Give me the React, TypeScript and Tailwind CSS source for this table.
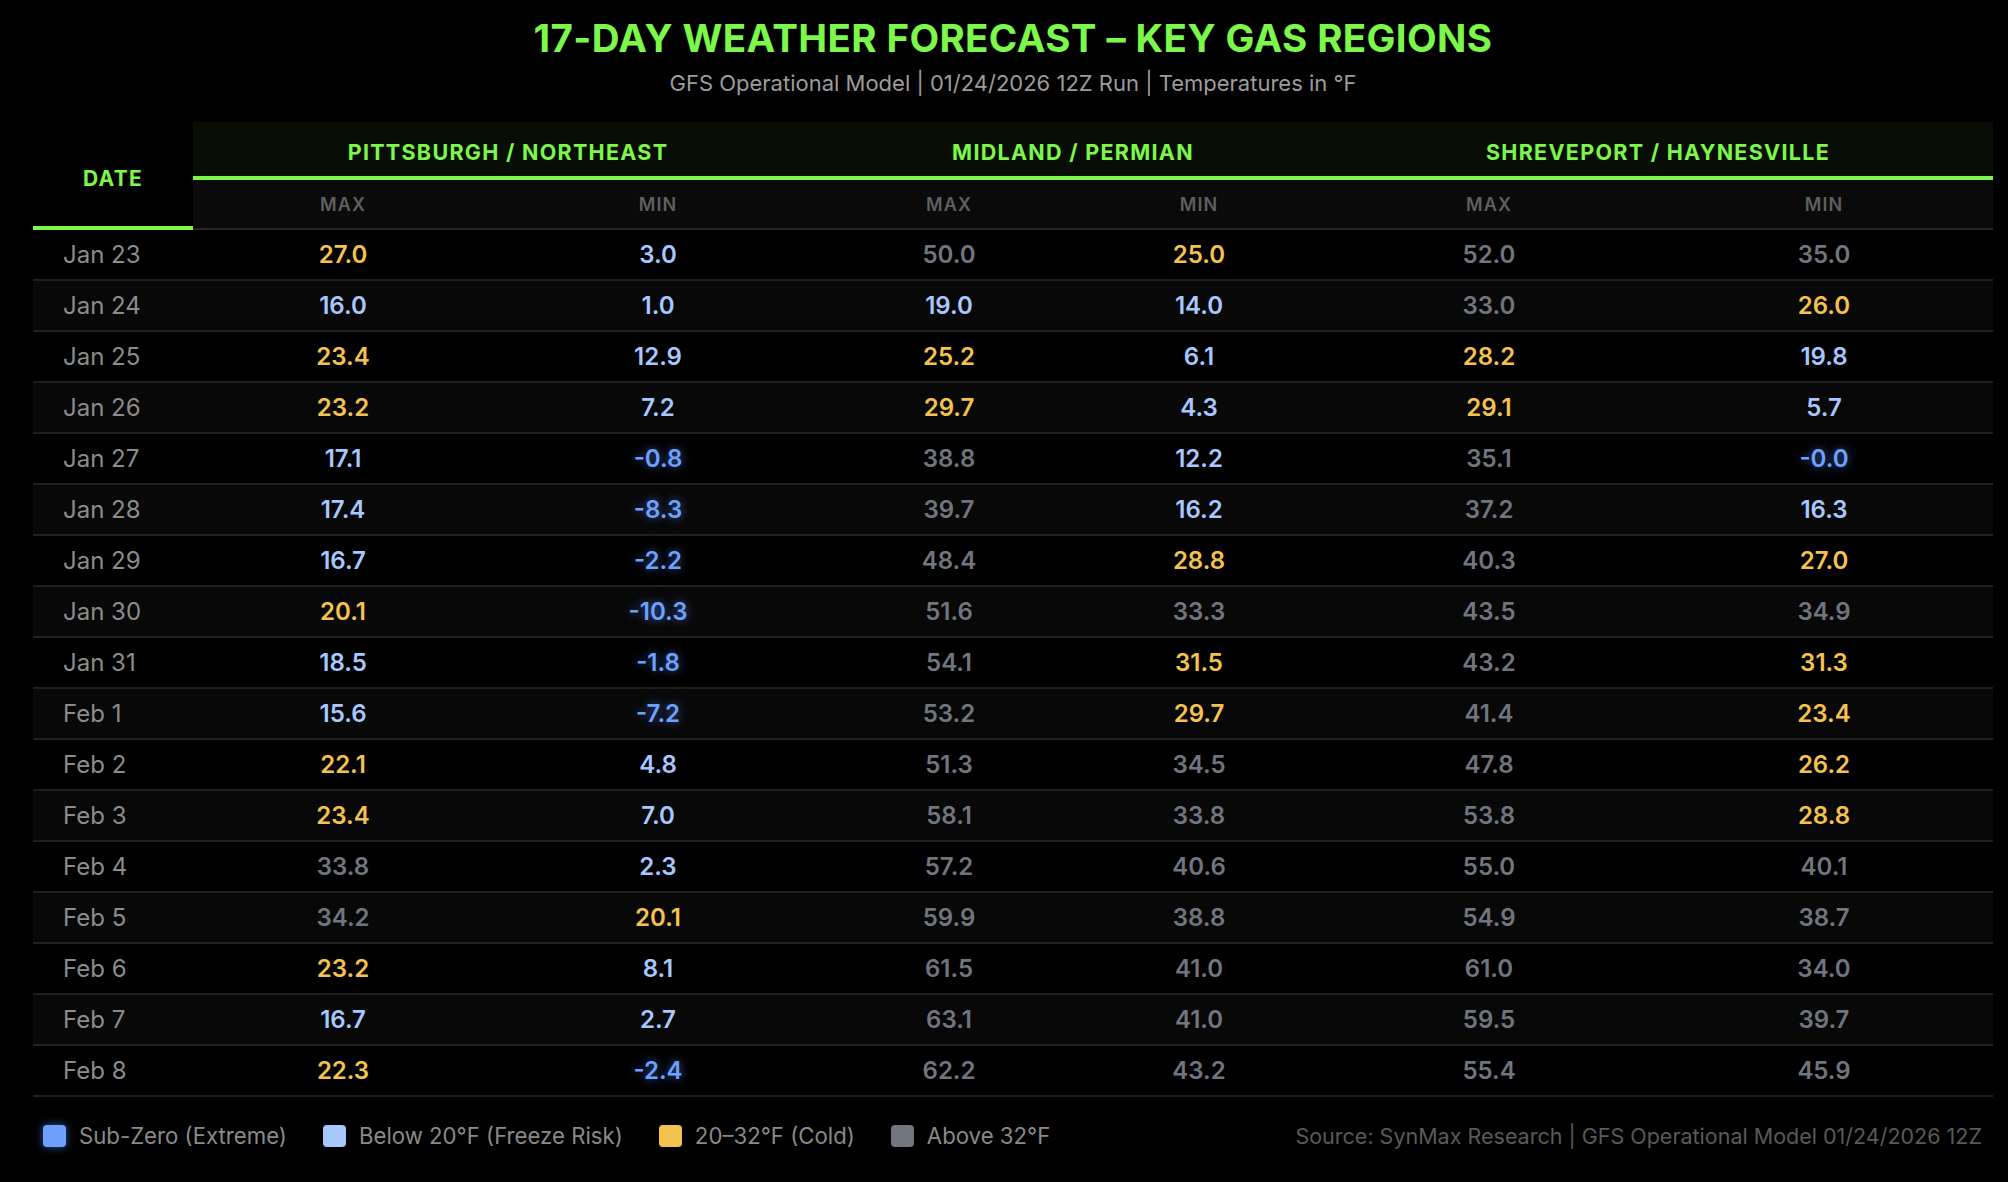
import type { CSSProperties } from 'react'

type Fila = { fecha: string; valores: string[] }

const filas: Fila[] = [
  { fecha: 'Jan 23', valores: ['27.0', '3.0', '50.0', '25.0', '52.0', '35.0'] },
  { fecha: 'Jan 24', valores: ['16.0', '1.0', '19.0', '14.0', '33.0', '26.0'] },
  { fecha: 'Jan 25', valores: ['23.4', '12.9', '25.2', '6.1', '28.2', '19.8'] },
  { fecha: 'Jan 26', valores: ['23.2', '7.2', '29.7', '4.3', '29.1', '5.7'] },
  { fecha: 'Jan 27', valores: ['17.1', '-0.8', '38.8', '12.2', '35.1', '-0.0'] },
  { fecha: 'Jan 28', valores: ['17.4', '-8.3', '39.7', '16.2', '37.2', '16.3'] },
  { fecha: 'Jan 29', valores: ['16.7', '-2.2', '48.4', '28.8', '40.3', '27.0'] },
  { fecha: 'Jan 30', valores: ['20.1', '-10.3', '51.6', '33.3', '43.5', '34.9'] },
  { fecha: 'Jan 31', valores: ['18.5', '-1.8', '54.1', '31.5', '43.2', '31.3'] },
  { fecha: 'Feb 1', valores: ['15.6', '-7.2', '53.2', '29.7', '41.4', '23.4'] },
  { fecha: 'Feb 2', valores: ['22.1', '4.8', '51.3', '34.5', '47.8', '26.2'] },
  { fecha: 'Feb 3', valores: ['23.4', '7.0', '58.1', '33.8', '53.8', '28.8'] },
  { fecha: 'Feb 4', valores: ['33.8', '2.3', '57.2', '40.6', '55.0', '40.1'] },
  { fecha: 'Feb 5', valores: ['34.2', '20.1', '59.9', '38.8', '54.9', '38.7'] },
  { fecha: 'Feb 6', valores: ['23.2', '8.1', '61.5', '41.0', '61.0', '34.0'] },
  { fecha: 'Feb 7', valores: ['16.7', '2.7', '63.1', '41.0', '59.5', '39.7'] },
  { fecha: 'Feb 8', valores: ['22.3', '-2.4', '62.2', '43.2', '55.4', '45.9'] },
]

const regiones = ['PITTSBURGH / NORTHEAST', 'MIDLAND / PERMIAN', 'SHREVEPORT / HAYNESVILLE']

const columnas = 'grid grid-cols-[160px_300px_330px_252px_248px_332px_338px]'

const fuente: CSSProperties = { fontFamily: 'Inter, "Noto Sans", sans-serif' }

// color según el rango de temperatura
function claseValor(v: string) {
  const n = parseFloat(v)
  if (v.startsWith('-')) return 'text-[#6ea0ff] [text-shadow:0_0_10px_rgba(90,140,255,0.65)]'
  if (n < 20) return 'text-[#a6c8ff]'
  if (n <= 32) return 'text-[#f6c24f]'
  return 'text-[#70757f]'
}

export default function App() {
  return (
    <div className="min-h-screen w-full bg-black pt-[15px] pl-[33px] pr-[15px]" style={fuente}>
      <header className="text-center">
        <h1 className="text-[38.5px] font-bold leading-[46px] tracking-[0.01em] text-[#7cf84b]">
          17-DAY WEATHER FORECAST – KEY GAS REGIONS
        </h1>
        <p className="mt-[8px] text-[22px] leading-[28px] text-[#9c9c9c]">
          GFS Operational Model | 01/24/2026 12Z Run | Temperatures in °F
        </p>
      </header>

      <div className="mt-[25px]">
        <div className={`${columnas} grid-rows-[58px_50px]`}>
          <div className="row-span-2 flex items-center justify-center border-b-4 border-[#7cf84b] bg-black pt-[10px] text-[21px] font-bold tracking-[0.06em] text-[#7cf84b]">
            DATE
          </div>
          {regiones.map((r) => (
            <div
              key={r}
              className="col-span-2 flex items-center justify-center border-b-4 border-[#7cf84b] bg-[#080e06] pt-[6px] text-[21.5px] font-bold tracking-[0.06em] text-[#7cf84b]"
            >
              {r}
            </div>
          ))}
          {regiones.flatMap((r) =>
            ['MAX', 'MIN'].map((m) => (
              <div
                key={r + m}
                className="flex items-center justify-center border-b-2 border-[#262626] bg-[#0a0a0a] text-[18px] font-semibold tracking-[0.06em] text-[#5f5f5f]"
              >
                {m}
              </div>
            )),
          )}
        </div>

        {filas.map((f, i) => (
          <div
            key={f.fecha}
            className={`${columnas} h-[51px] border-b-2 border-[#1f1f1f] ${i % 2 === 1 ? 'bg-[#080808]' : 'bg-black'}`}
          >
            <div className="flex items-center pl-[30px] text-[24px] text-[#8c8c8c]">{f.fecha}</div>
            {f.valores.map((v, j) => (
              <div key={j} className={`flex items-center justify-center text-[24px] font-semibold ${claseValor(v)}`}>
                {v}
              </div>
            ))}
          </div>
        ))}
      </div>

      <footer className="mt-[27px] flex items-center justify-between pl-[10px] pr-[11px] leading-[24px]">
        <div className="flex items-center gap-[36px] text-[22.2px] text-[#8a8a8a]">
          <div className="flex items-center gap-[13px]">
            <span className="h-[22px] w-[23px] rounded-[4px] bg-[#6ea0ff] shadow-[0_0_8px_rgba(90,140,255,0.6)]" />
            Sub-Zero (Extreme)
          </div>
          <div className="flex items-center gap-[13px]">
            <span className="h-[22px] w-[23px] rounded-[4px] bg-[#a6c8ff]" />
            Below 20°F (Freeze Risk)
          </div>
          <div className="flex items-center gap-[13px]">
            <span className="h-[22px] w-[23px] rounded-[4px] bg-[#f6c24f]" />
            20–32°F (Cold)
          </div>
          <div className="flex items-center gap-[13px]">
            <span className="h-[22px] w-[23px] rounded-[4px] bg-[#70757f]" />
            Above 32°F
          </div>
        </div>
        <p className="text-[21.5px] text-[#5a5a5a]">Source: SynMax Research | GFS Operational Model 01/24/2026 12Z</p>
      </footer>
    </div>
  )
}
